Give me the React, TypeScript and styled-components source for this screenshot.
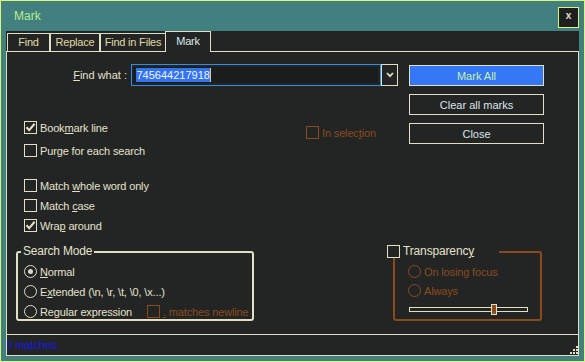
import React from 'react';
import styled, { createGlobalStyle } from 'styled-components';

// palette taken from the dark dialog
const C = {
  frame: '#d9f57c',
  teal: '#428080',
  bg: '#232525',
  field: '#1b1c1c',
  line: '#e2dfc2',
  text: '#e4e2cb',
  bright: '#dde4ea',
  tab: '#e2d9a2',
  brown: '#8b4a1e',
  blue: '#3478f6',
  focus: '#2f8ee6',
};

const GlobalStyle = createGlobalStyle`
  html, body { margin: 0; padding: 0; background: ${C.teal}; }
  body { font-family: "Liberation Sans", Arial, sans-serif; font-size: 11px; }
  * { box-sizing: border-box; }
  u { text-underline-offset: 1px; }
`;

const Window = styled.div`
  width: 585px;
  height: 362px;
  border: 1px solid ${C.frame};
  background: ${C.teal};
  display: flex;
  flex-direction: column;
  padding: 0 5px 5px;
`;

const TitleBar = styled.div`
  height: 30px;
  display: flex;
  justify-content: space-between;
  padding-left: 8px;
`;

const Title = styled.span`
  align-self: center;
  margin-top: -1px;
  color: #b4ee8c;
  font-size: 12px;
`;

const CloseButton = styled.div`
  margin-top: 6px;
  width: 21px;
  height: 21px;
  border: 1px solid ${C.frame};
  background: #1e2020;
  color: ${C.line};
  display: flex;
  align-items: center;
  justify-content: center;
  font-family: "Liberation Mono", monospace;
  font-weight: bold;
  font-size: 10px;
  line-height: 1;
  padding-bottom: 1px;
`;

const Client = styled.div`
  flex: 1;
  background: ${C.bg};
  display: flex;
  flex-direction: column;
`;

const TabBar = styled.div`
  height: 20px;
  display: flex;
  align-items: flex-end;
  padding-left: 1px;
`;

const Tab = styled.div<{ $active?: boolean; $w: number }>`
  width: ${p => p.$w}px;
  height: ${p => (p.$active ? 21 : 18)}px;
  margin-bottom: ${p => (p.$active ? -1 : 0)}px;
  margin-left: ${p => (p.$active ? -1 : 0)}px;
  padding-bottom: ${p => (p.$active ? 3 : 1)}px;
  border: 1px solid ${C.line};
  border-bottom: none;
  background: ${C.bg};
  color: ${p => (p.$active ? C.bright : C.tab)};
  display: flex;
  align-items: center;
  justify-content: center;
  position: relative;
  z-index: ${p => (p.$active ? 1 : 0)};
  letter-spacing: -0.2px;
  white-space: nowrap;
`;

const Panel = styled.div`
  height: 284px;
  border: 1px solid ${C.line};
  display: flex;
  flex-direction: column;
`;

const TopArea = styled.div`
  display: flex;
  align-items: flex-start;
`;

const LeftCol = styled.div`
  width: 402px;
  display: flex;
  flex-direction: column;
`;

const FindRow = styled.div`
  margin-top: 12px;
  height: 22px;
  display: flex;
  align-items: center;
`;

const FieldLabel = styled.span`
  width: 120px;
  margin-right: 4px;
  text-align: right;
  color: ${C.text};
  white-space: nowrap;
`;

const Combo = styled.div`
  display: flex;
  height: 22px;
`;

const ComboInput = styled.div`
  width: 250px;
  border: 1px solid ${C.focus};
  padding: 2px 2px 2px 1px;
`;

const InputField = styled.div`
  height: 100%;
  background: ${C.field};
  display: flex;
  align-items: center;
  padding-left: 3px;
`;

const Selected = styled.span`
  background: #3474ee;
  color: #eef4ff;
  height: 14px;
  line-height: 14px;
  padding: 0 0.5px;
`;

const Caret = styled.span`
  width: 1px;
  height: 14px;
  background: #d8c8a8;
`;

const ComboButton = styled.div`
  width: 17px;
  border: 1px solid ${C.line};
  display: flex;
  align-items: center;
  justify-content: center;
`;

const ButtonColumn = styled.div`
  margin-top: 13px;
  display: flex;
  flex-direction: column;
  gap: 8px;
`;

const Button = styled.div<{ $primary?: boolean }>`
  width: 135px;
  height: 21px;
  border: 1px solid ${C.line};
  background: ${p => (p.$primary ? C.blue : C.bg)};
  color: ${p => (p.$primary ? '#c8f0a4' : C.bright)};
  display: flex;
  align-items: center;
  justify-content: center;
  font-size: 11px;
`;

const OptionRow = styled.div`
  margin-top: 35px;
  display: flex;
  align-items: flex-start;
`;

const Stack = styled.div<{ $gap: number; $width?: number; $left?: number; $top?: number }>`
  display: flex;
  flex-direction: column;
  gap: ${p => p.$gap}px;
  width: ${p => (p.$width ? `${p.$width}px` : 'auto')};
  margin-left: ${p => p.$left ?? 0}px;
  margin-top: ${p => p.$top ?? 0}px;
`;

const Item = styled.label<{ $disabled?: boolean; $top?: number; $width?: number }>`
  display: flex;
  align-items: center;
  gap: 3px;
  height: 13px;
  margin-top: ${p => p.$top ?? 0}px;
  width: ${p => (p.$width ? `${p.$width}px` : 'auto')};
  flex: none;
  color: ${p => (p.$disabled ? C.brown : C.text)};
  white-space: nowrap;
  letter-spacing: -0.15px;
`;

const Box = styled.span<{ $disabled?: boolean }>`
  width: 13px;
  height: 13px;
  flex: none;
  border: 1px solid ${p => (p.$disabled ? C.brown : C.line)};
  display: flex;
  align-items: center;
  justify-content: center;
`;

const Circle = styled.span<{ $disabled?: boolean }>`
  width: 13px;
  height: 13px;
  flex: none;
  border-radius: 50%;
  border: 1px solid ${p => (p.$disabled ? C.brown : C.line)};
  display: flex;
  align-items: center;
  justify-content: center;
`;

const Dot = styled.span`
  width: 5px;
  height: 5px;
  border-radius: 50%;
  background: #d6d6d2;
`;

const BottomArea = styled.div`
  margin-top: 19px;
  display: flex;
  align-items: flex-start;
`;

const GroupBox = styled.div<{ $brown?: boolean; $left: number; $width: number; $pad: number }>`
  position: relative;
  margin-left: ${p => p.$left}px;
  width: ${p => p.$width}px;
  height: 70px;
  border: 2px solid ${p => (p.$brown ? C.brown : C.line)};
  border-radius: 3px;
  padding: 12px 0 0 ${p => p.$pad}px;
  display: flex;
  flex-direction: column;
`;

const GroupTitle = styled.div<{ $left: number; $width?: number }>`
  position: absolute;
  top: -9px;
  left: ${p => p.$left}px;
  width: ${p => (p.$width ? `${p.$width}px` : 'auto')};
  height: 14px;
  padding: 0 2px;
  background: ${C.bg};
  color: ${C.text};
  display: flex;
  align-items: center;
  font-size: 12px;
  letter-spacing: -0.2px;
  white-space: nowrap;
`;

const SliderWrap = styled.div`
  margin: 7px 0 0 1px;
  height: 11px;
  display: flex;
  align-items: center;
`;

const Track = styled.div`
  position: relative;
  width: 119px;
  height: 5px;
  border: 1px solid ${C.line};
  background: ${C.bg};
`;

const Thumb = styled.div`
  position: absolute;
  top: -4px;
  width: 6px;
  height: 11px;
  border: 1px solid ${C.line};
  background: #8f4c1c;
`;

const StatusBar = styled.div`
  height: 21px;
  border: 1px solid ${C.line};
  border-top: none;
  display: flex;
  justify-content: space-between;
  overflow: hidden;
`;

const StatusText = styled.span`
  align-self: center;
  margin-left: -1px;
  color: #1414f5;
  font-size: 11px;
`;

const Grip = styled.svg`
  align-self: flex-end;
  margin-bottom: 1px;
  flex: none;
`;

const CheckMark = () => (
  <svg width="11" height="11" viewBox="0 0 11 11">
    <path d="M1.5 5.2 L4.2 8.2 L9.6 1.8" fill="none" stroke={C.line} strokeWidth="2.1" />
  </svg>
);

type OptProps = {
  children: React.ReactNode;
  checked?: boolean;
  disabled?: boolean;
  top?: number;
  width?: number;
};

const Check = ({ children, checked, disabled, top, width }: OptProps) => (
  <Item $disabled={disabled} $top={top} $width={width}>
    <Box $disabled={disabled}>{checked && <CheckMark />}</Box>
    <span>{children}</span>
  </Item>
);

const Radio = ({ children, checked, disabled, width }: OptProps) => (
  <Item $disabled={disabled} $width={width}>
    <Circle $disabled={disabled}>{checked && <Dot />}</Circle>
    <span>{children}</span>
  </Item>
);

const tabs = [
  { label: 'Find', w: 43 },
  { label: 'Replace', w: 50 },
  { label: 'Find in Files', w: 66 },
  { label: 'Mark', w: 46, active: true },
];

const grip = [
  [6, 0],
  [3, 3], [6, 3],
  [0, 6], [3, 6], [6, 6],
];

const App: React.FC = () => {
  const transparency = 0.7;

  return (
    <>
      <GlobalStyle />
      <Window>
        <TitleBar>
          <Title>Mark</Title>
          <CloseButton>x</CloseButton>
        </TitleBar>

        <Client>
          <TabBar>
            {tabs.map(t => (
              <Tab key={t.label} $w={t.w} $active={t.active}>{t.label}</Tab>
            ))}
          </TabBar>

          <Panel>
            <TopArea>
              <LeftCol>
                <FindRow>
                  <FieldLabel><u>F</u>ind what :</FieldLabel>
                  <Combo>
                    <ComboInput>
                      <InputField>
                        <Selected>745644217918</Selected>
                        <Caret />
                      </InputField>
                    </ComboInput>
                    <ComboButton>
                      <svg width="8" height="6" viewBox="0 0 8 6">
                        <path d="M1 1 L4 4.2 L7 1" fill="none" stroke={C.line} strokeWidth="1.8" />
                      </svg>
                    </ComboButton>
                  </Combo>
                </FindRow>

                <OptionRow>
                  <Stack $gap={10} $width={282} $left={17}>
                    <Check checked>Book<u>m</u>ark line</Check>
                    <Check>Purge for each search</Check>
                  </Stack>
                  <Check disabled top={5}>In selec<u>t</u>ion</Check>
                </OptionRow>
              </LeftCol>

              <ButtonColumn>
                <Button $primary>Mark All</Button>
                <Button>Clear all marks</Button>
                <Button>Close</Button>
              </ButtonColumn>
            </TopArea>

            <Stack $gap={7} $left={17} $top={22}>
              <Check>Match <u>w</u>hole word only</Check>
              <Check>Match <u>c</u>ase</Check>
              <Check checked>Wra<u>p</u> around</Check>
            </Stack>

            <BottomArea>
              <GroupBox $left={9} $width={238} $pad={6}>
                <GroupTitle $left={3}>Search Mode</GroupTitle>
                <Stack $gap={7}>
                  <Radio checked><u>N</u>ormal</Radio>
                  <Radio>E<u>x</u>tended (\n, \r, \t, \0, \x...)</Radio>
                  <Item as="div">
                    <Radio width={120}>Re<u>g</u>ular expression</Radio>
                    <Check disabled><u>.</u> matches newline</Check>
                  </Item>
                </Stack>
              </GroupBox>

              <GroupBox $brown $left={139} $width={149} $pad={13}>
                <GroupTitle $left={-10} $width={114}>
                  <Check>Transparenc<u>y</u></Check>
                </GroupTitle>
                <Stack $gap={6}>
                  <Radio disabled>On losing focus</Radio>
                  <Radio disabled>Always</Radio>
                </Stack>
                <SliderWrap>
                  <Track>
                    <Thumb style={{ left: Math.round(transparency * 117) - 1 }} />
                  </Track>
                </SliderWrap>
              </GroupBox>
            </BottomArea>
          </Panel>

          <StatusBar>
            <StatusText>0 matches.</StatusText>
            <Grip width="8" height="8" viewBox="0 0 8 8">
              {grip.map(([x, y]) => (
                <rect key={`${x}-${y}`} x={x} y={y} width="2" height="2" fill={C.line} />
              ))}
            </Grip>
          </StatusBar>
        </Client>
      </Window>
    </>
  );
};

export default App;
